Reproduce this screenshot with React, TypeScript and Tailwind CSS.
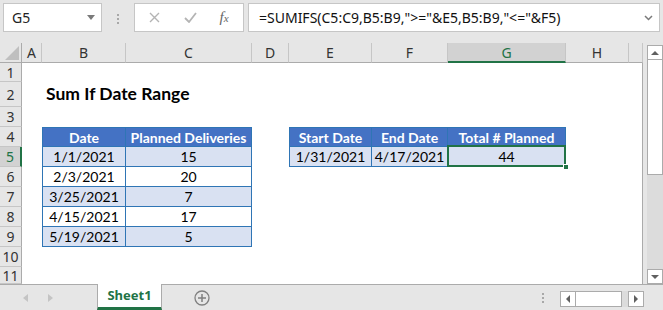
import React from "react";

const colHeads = ["A", "B", "C", "D", "E", "F", "G", "H", ""];
const rowNums = [1, 2, 3, 4, 5, 6, 7, 8, 9, 10, 11];

const deliveries = [
  { date: "1/1/2021", qty: 15 },
  { date: "2/3/2021", qty: 20 },
  { date: "3/25/2021", qty: 7 },
  { date: "4/15/2021", qty: 17 },
  { date: "5/19/2021", qty: 5 },
];

const uiFont = { fontFamily: '"Noto Sans", "Open Sans", sans-serif' };
const cellFont = { fontFamily: 'Lato, "Open Sans", sans-serif' };

const FormulaBar = () => (
  <div className="flex h-[36px] items-start px-[3px] pt-[3px]" style={uiFont}>
    <div className="flex h-[29px] w-[99px] items-center justify-between border border-[#c6c6c6] bg-white pl-[8px] pr-[6px] text-[14px] text-[#222]">
      <span>G5</span>
      <svg width="8" height="5" viewBox="0 0 8 5">
        <path d="M0 0h8L4 5z" fill="#7a7a7a" />
      </svg>
    </div>
    <div className="flex w-[32px] flex-col items-center justify-center gap-[2px] pt-[11px]">
      <span className="h-[2px] w-[2px] bg-[#a8a8a8]" />
      <span className="h-[2px] w-[2px] bg-[#a8a8a8]" />
      <span className="h-[2px] w-[2px] bg-[#a8a8a8]" />
    </div>
    <div className="flex h-[29px] w-[110px] items-center border border-[#c6c6c6] bg-white">
      <div className="flex w-[38px] justify-center">
        <svg width="11" height="11" viewBox="0 0 11 11">
          <path d="M1 1l9 9M10 1l-9 9" stroke="#b4b4b4" strokeWidth="1.4" />
        </svg>
      </div>
      <div className="flex w-[34px] justify-center">
        <svg width="13" height="11" viewBox="0 0 13 11">
          <path d="M1 6l4 4 7-9" stroke="#b4b4b4" strokeWidth="1.8" fill="none" />
        </svg>
      </div>
      <div
        className="flex w-[34px] justify-center text-[15px] italic text-[#666]"
        style={{ fontFamily: '"Liberation Serif", serif' }}
      >
        f<span className="mt-[4px] text-[11px]">x</span>
      </div>
    </div>
    <div className="ml-[4px] flex h-[29px] w-[412px] items-center justify-between border border-[#c6c6c6] bg-white pl-[10px] pr-[6px] text-[14px] text-[#111]">
      <span>=SUMIFS(C5:C9,B5:B9,"&gt;="&amp;E5,B5:B9,"&lt;="&amp;F5)</span>
      <svg width="9" height="6" viewBox="0 0 9 6">
        <path d="M1 1l3.5 3.5L8 1" stroke="#7a7a7a" strokeWidth="1.5" fill="none" />
      </svg>
    </div>
  </div>
);

const th = "flex items-center justify-center border-r border-b border-[#2f75b5] bg-[#4472c4] font-bold text-white";
const td = "flex items-center justify-center border-r border-b border-[#2f75b5] text-black";

const Sheet = () => (
  <div className="mt-[7px] grid w-[643px] grid-cols-[22px_20px_84px_126px_37px_83px_76px_118px_63px_14px] grid-rows-[20px_19px_25px_20px_20px_20px_20px_20px_20px_20px_20px_17px] bg-white">
    {/* corner */}
    <div className="flex items-end justify-end border-r border-b border-[#ababab] bg-[#e6e6e6] p-[2px]">
      <svg width="14" height="14" viewBox="0 0 14 14">
        <path d="M14 0v14H0z" fill="#bfbfbf" />
      </svg>
    </div>
    {colHeads.map((c, i) => (
      <div
        key={i}
        className={
          c === "G"
            ? "flex items-center justify-center border-r border-[#c6c6c6] border-b-2 border-b-[#217346] bg-[#d2d2d2] text-[14px] text-[#217346]"
            : "flex items-center justify-center border-r border-b border-[#c6c6c6] border-b-[#ababab] bg-[#e6e6e6] text-[14px] text-[#333]"
        }
        style={uiFont}
      >
        {c}
      </div>
    ))}

    {rowNums.map((n) => (
      <div
        key={n}
        className={
          n === 5
            ? "col-start-1 flex items-center justify-center border-b border-[#c6c6c6] border-r-2 border-r-[#217346] bg-[#d2d2d2] text-[14px] text-[#217346]"
            : "col-start-1 flex items-center justify-center border-b border-[#c6c6c6] border-r border-r-[#ababab] bg-[#e6e6e6] text-[14px] text-[#333]"
        }
        style={{ ...uiFont, gridRowStart: n + 1 }}
      >
        {n}
      </div>
    ))}

    {/* title */}
    <div
      className="col-start-3 col-span-4 row-start-3 flex items-center pl-[4px] text-[17.5px] font-bold text-black"
      style={cellFont}
    >
      Sum If Date Range
    </div>

    {/* deliveries table */}
    <div
      className="col-start-3 col-span-2 row-start-5 row-span-6 grid grid-cols-[83px_126px] grid-rows-[19px_20px_20px_20px_20px_20px] border-l border-t border-[#2f75b5] text-[14px]"
      style={cellFont}
    >
      <div className={th}>Date</div>
      <div className={th}>Planned Deliveries</div>
      {deliveries.map((d, i) => (
        <React.Fragment key={d.date}>
          <div className={`${td} ${i % 2 === 0 ? "bg-[#d9e1f2]" : "bg-white"}`}>{d.date}</div>
          <div className={`${td} ${i % 2 === 0 ? "bg-[#d9e1f2]" : "bg-white"}`}>{d.qty}</div>
        </React.Fragment>
      ))}
    </div>

    {/* summary table */}
    <div
      className="col-start-6 col-span-3 row-start-5 row-span-2 grid grid-cols-[82px_76px_118px] grid-rows-[19px_20px] border-l border-t border-[#2f75b5] text-[14px]"
      style={cellFont}
    >
      <div className={th}>Start Date</div>
      <div className={th}>End Date</div>
      <div className={th}>Total # Planned</div>
      <div className={`${td} bg-[#d9e1f2]`}>1/31/2021</div>
      <div className={`${td} bg-[#d9e1f2]`}>4/17/2021</div>
      <div className={`${td} relative bg-[#d9e1f2]`}>
        44
        <div className="absolute -top-[2px] -left-[1px] -right-[1px] -bottom-[1px] border-2 border-[#217346]" />
        <div className="absolute -right-[4px] -bottom-[4px] h-[6px] w-[6px] border border-white bg-[#217346]" />
      </div>
    </div>

    {/* right edge of grid */}
    <div className="col-start-10 row-start-2 row-span-11 border-r border-[#ababab]" />
  </div>
);

const VScroll = () => (
  <div className="ml-[4px] mt-[9px] flex h-[239px] w-[16px] flex-col bg-[#dcdcdc]">
    <div className="flex h-[15px] items-center justify-center border border-[#ababab] bg-white">
      <svg width="8" height="4" viewBox="0 0 8 4">
        <path d="M0 4h8L4 0z" fill="#606060" />
      </svg>
    </div>
    <div className="h-[115px] border border-t-0 border-[#ababab] bg-white" />
    <div className="flex-1" />
    <div className="flex h-[15px] items-center justify-center border border-[#ababab] bg-white">
      <svg width="8" height="4" viewBox="0 0 8 4">
        <path d="M0 0h8L4 4z" fill="#606060" />
      </svg>
    </div>
  </div>
);

const TabBar = () => (
  <div className="flex h-[26px] items-stretch border-t border-[#ababab]" style={uiFont}>
    <div className="flex w-[97px] items-center gap-[20px] pl-[23px]">
      <svg width="5" height="8" viewBox="0 0 5 8">
        <path d="M5 0v8L0 4z" fill="#c4c4c4" />
      </svg>
      <svg width="5" height="8" viewBox="0 0 5 8">
        <path d="M0 0v8l5-4z" fill="#c4c4c4" />
      </svg>
    </div>
    <div className="-mt-px flex w-[65px] items-center justify-center border-x border-[#ababab] border-b-[3px] border-b-[#217346] bg-white text-[13px] font-bold text-[#217346]">
      Sheet1
    </div>
    <div className="flex w-[80px] items-center justify-center">
      <svg width="16" height="16" viewBox="0 0 16 16">
        <circle cx="8" cy="8" r="7" stroke="#808080" strokeWidth="1.3" fill="none" />
        <path d="M8 4v8M4 8h8" stroke="#808080" strokeWidth="1.5" />
      </svg>
    </div>
    <div className="flex-1" />
    <div className="flex w-[8px] flex-col items-center justify-center gap-[2px]">
      <span className="h-[2px] w-[2px] bg-[#a8a8a8]" />
      <span className="h-[2px] w-[2px] bg-[#a8a8a8]" />
      <span className="h-[2px] w-[2px] bg-[#a8a8a8]" />
    </div>
    <div className="ml-[13px] mr-[19px] mt-[6px] flex h-[16px] w-[84px] bg-[#dcdcdc]">
      <div className="flex w-[16px] items-center justify-center border border-[#ababab] bg-white">
        <svg width="4" height="8" viewBox="0 0 4 8">
          <path d="M4 0v8L0 4z" fill="#606060" />
        </svg>
      </div>
      <div className="w-[46px] border-y border-r border-[#ababab] bg-white" />
      <div className="flex-1" />
      <div className="flex w-[16px] items-center justify-center border border-[#ababab] bg-white">
        <svg width="4" height="8" viewBox="0 0 4 8">
          <path d="M0 0v8l4-4z" fill="#606060" />
        </svg>
      </div>
    </div>
  </div>
);

export default function App() {
  return (
    <div className="flex h-[310px] w-[663px] flex-col overflow-hidden bg-[#e6e6e6]">
      <FormulaBar />
      <div className="flex h-[248px]">
        <Sheet />
        <VScroll />
      </div>
      <TabBar />
    </div>
  );
}
